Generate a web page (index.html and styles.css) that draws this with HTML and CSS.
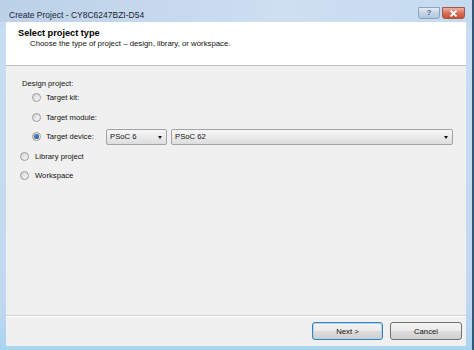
FILE: index.html
```html
<!DOCTYPE html>
<html>
<head>
  <meta charset="UTF-8">
  <title>Create Project</title>
  <link rel="stylesheet" href="styles.css">
</head>
<body>
  <div class="window">
    <div class="titlebar">
      <span class="title">Create Project - CY8C6247BZI-D54</span>
      <div class="caption-buttons">
        <span class="cap-btn help">?</span>
        <span class="cap-btn close">
          <svg width="9" height="7" viewBox="0 0 9 7">
            <path d="M1.5 0.5 L7.5 6.5 M7.5 0.5 L1.5 6.5" stroke="#fff" stroke-width="1.8" fill="none"/>
          </svg>
        </span>
      </div>
    </div>

    <div class="client">
      <div class="header">
        <div class="header-title">Select project type</div>
        <div class="header-sub">Choose the type of project – design, library, or workspace.</div>
      </div>

      <div class="content">
        <div class="group-label">Design project:</div>
        <div class="row sub">
          <span class="radio"></span>
          <span>Target kit:</span>
        </div>
        <div class="row sub">
          <span class="radio"></span>
          <span>Target module:</span>
        </div>
        <div class="row sub">
          <span class="radio checked"></span>
          <span class="field-label">Target device:</span>
          <div class="combo family">PSoC 6<span class="arrow"></span></div>
          <div class="combo device">PSoC 62<span class="arrow"></span></div>
        </div>
        <div class="row">
          <span class="radio"></span>
          <span>Library project</span>
        </div>
        <div class="row">
          <span class="radio"></span>
          <span>Workspace</span>
        </div>
      </div>

      <div class="footer">
        <button class="btn default">Next &gt;</button>
        <button class="btn">Cancel</button>
      </div>
    </div>
  </div>
</body>
</html>
```

FILE: styles.css
```css
body {
  margin: 0;
  background: #33587a;
  font-family: "Liberation Sans", Arial, sans-serif;
  color: #111;
}
.window {
  width: 472px;
  height: 350px;
  background: linear-gradient(to bottom, #b7cde6 0px, #c9dcf1 30px, #c3d8ef 300px, #a9d5f0 346px);
  display: flex;
  flex-direction: column;
}
.titlebar {
  height: 22px;
  display: flex;
  align-items: flex-start;
  padding-left: 9px;
  background: linear-gradient(to right, #bcd0e8, #cddff1 60%, #c6daef);
}
.title {
  margin-top: 10px;
  font-size: 8.5px;
  line-height: 10px;
  color: #1a2533;
}
.caption-buttons {
  margin-left: auto;
  margin-right: 7px;
  margin-top: 7px;
  display: flex;
  gap: 2px;
}
.cap-btn {
  height: 12px;
  border-radius: 0 0 3px 3px;
  border: 1px solid #8aa3bf;
  box-sizing: border-box;
  display: flex;
  align-items: center;
  justify-content: center;
}
.help {
  width: 22px;
  background: linear-gradient(to bottom, #e3ecf6, #c3d4e7 50%, #b2c6dd);
  color: #4d6684;
  font-size: 8px;
  font-weight: bold;
  line-height: 10px;
}
.close {
  width: 23px;
  border-color: #a0564a;
  background: linear-gradient(to bottom, #eeb0a2, #d9705a 50%, #c94f38);
}
.client {
  margin: 0 6px;
  height: 324px;
  background: #f0f0f0;
  display: flex;
  flex-direction: column;
}
.header {
  height: 44px;
  box-sizing: border-box;
  background: #fff;
  border-bottom: 1px solid #bdbdbd;
  padding: 5px 0 0 12px;
}
.header-title {
  font-size: 9.2px;
  font-weight: bold;
  line-height: 12px;
  color: #000;
}
.header-sub {
  margin-left: 12px;
  font-size: 7.8px;
  line-height: 10px;
}
.content {
  flex: 1;
  padding: 13px 0 0 14px;
  font-size: 7.7px;
}
.group-label {
  margin-left: 2px;
  line-height: 9px;
}
.row {
  height: 19.5px;
  display: flex;
  align-items: center;
  gap: 6px;
}
.row.sub {
  padding-left: 12px;
  gap: 5px;
}
.radio {
  position: relative;
  width: 9px;
  height: 9px;
  box-sizing: border-box;
  border-radius: 50%;
  border: 1px solid #9a9a9a;
  background: linear-gradient(135deg, #d4d4d4, #f9f9f9);
  flex: none;
}
.radio.checked::after {
  content: "";
  position: absolute;
  left: 1px;
  top: 1px;
  width: 5px;
  height: 5px;
  border-radius: 50%;
  background: radial-gradient(circle at 40% 40%, #4f8fc6, #17406e);
}
.field-label {
  width: 55px;
}
.combo {
  position: relative;
  height: 16px;
  box-sizing: border-box;
  border: 1px solid #a3a3a3;
  border-radius: 2px;
  background: linear-gradient(to bottom, #f7f7f7, #ebebeb 50%, #dddddd);
  padding-left: 3px;
  line-height: 14px;
}
.combo.family {
  width: 61px;
}
.combo.device {
  width: 282px;
  margin-left: -1px;
}
.arrow {
  position: absolute;
  right: 4px;
  top: 6px;
  border-left: 2.5px solid transparent;
  border-right: 2.5px solid transparent;
  border-top: 3px solid #111;
}
.footer {
  height: 31px;
  box-sizing: border-box;
  border-top: 1px solid #d0d0d0;
  box-shadow: inset 0 1px #fff;
  padding: 6px 4px 0 0;
  display: flex;
  justify-content: flex-end;
  align-items: flex-start;
  gap: 7px;
}
.btn {
  width: 72px;
  height: 18px;
  margin: 0;
  padding: 0;
  border: 1px solid #707070;
  border-radius: 3px;
  background: linear-gradient(to bottom, #f3f3f3, #ebebeb 50%, #dddddd 51%, #cfcfcf);
  font-family: "Liberation Sans", Arial, sans-serif;
  font-size: 7.7px;
  color: #111;
}
.btn.default {
  width: 71px;
  border-color: #3c7fb1;
  box-shadow: inset 0 0 0 1px #a6d8f3;
}
```
